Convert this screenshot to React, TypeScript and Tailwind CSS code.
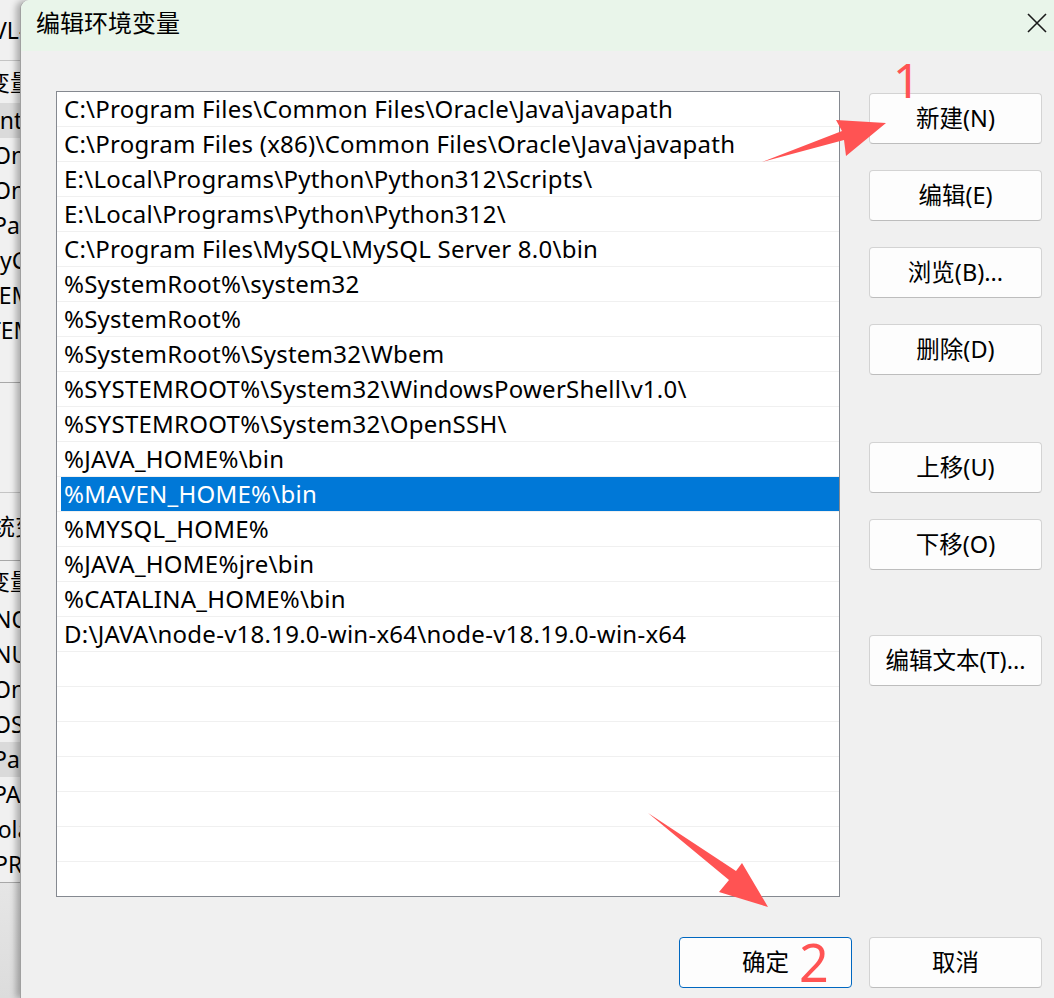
import React from "react";

const items: string[] = [
  "C:\\Program Files\\Common Files\\Oracle\\Java\\javapath",
  "C:\\Program Files (x86)\\Common Files\\Oracle\\Java\\javapath",
  "E:\\Local\\Programs\\Python\\Python312\\Scripts\\",
  "E:\\Local\\Programs\\Python\\Python312\\",
  "C:\\Program Files\\MySQL\\MySQL Server 8.0\\bin",
  "%SystemRoot%\\system32",
  "%SystemRoot%",
  "%SystemRoot%\\System32\\Wbem",
  "%SYSTEMROOT%\\System32\\WindowsPowerShell\\v1.0\\",
  "%SYSTEMROOT%\\System32\\OpenSSH\\",
  "%JAVA_HOME%\\bin",
  "%MAVEN_HOME%\\bin",
  "%MYSQL_HOME%",
  "%JAVA_HOME%jre\\bin",
  "%CATALINA_HOME%\\bin",
  "D:\\JAVA\\node-v18.19.0-win-x64\\node-v18.19.0-win-x64",
  "",
  "",
  "",
  "",
  "",
  "",
  "",
];

function Btn({ label, primary, className = "" }: { label: string; primary?: boolean; className?: string }) {
  return (
    <div
      className={
        "w-[173px] h-[51px] shrink-0 flex items-center justify-center rounded-[4px] bg-[#fdfdfd] text-[23.5px] text-black " +
        (primary
          ? "border border-[#0067c0] "
          : "border border-[#d3d3d3] border-b-[#bdbdbd] ") +
        className
      }
    >
      {label}
    </div>
  );
}

function StripRow({ text, h, bg = "", ml = "-ml-[3px]" }: { text: string; h: string; bg?: string; ml?: string }) {
  return (
    <div className={"flex items-center whitespace-nowrap shrink-0 " + h + " " + bg}>
      <span className={ml}>{text}</span>
    </div>
  );
}

export default function App() {
  return (
    <div className="relative w-[1054px] h-[998px] overflow-hidden flex bg-[#f0f0f0] font-['Noto_Sans','Noto_Sans_CJK_SC',sans-serif] text-black">
      {/* background window strip */}
      <div className="w-[24px] shrink-0 flex flex-col overflow-hidden text-[23px] bg-[#f0f0f0] -mr-[4px]">
        <StripRow text="VL-" h="h-[60px]" ml="-ml-[7px]" />
        <div className="h-px bg-[#c4c4c4] shrink-0" />
        <StripRow text="变量" h="h-[42px]" ml="-ml-[13px]" />
        <StripRow text="Inte" h="h-[35px]" bg="bg-[#dadada]" ml="-ml-[8px]" />
        <StripRow text="On" h="h-[35px]" ml="-ml-[7px]" />
        <StripRow text="On" h="h-[35px]" ml="-ml-[7px]" />
        <StripRow text="Pat" h="h-[35px]" ml="-ml-[7px]" />
        <StripRow text="PyC" h="h-[35px]" ml="-ml-[14px]" />
        <StripRow text="TEM" h="h-[35px]" ml="-ml-[14px]" />
        <StripRow text="TEM" h="h-[35px]" ml="-ml-[12px]" />
        <div className="h-[34px] shrink-0" />
        <div className="h-px bg-[#a8a8a8] shrink-0" />
        <div className="h-[109px] shrink-0" />
        <div className="h-px bg-[#c4c4c4] shrink-0" />
        <StripRow text="统变" h="h-[67px]" ml="-ml-[8px]" />
        <div className="h-px bg-[#a8a8a8] shrink-0" />
        <StripRow text="变量" h="h-[41px]" ml="-ml-[13px]" />
        <StripRow text="NO" h="h-[35px]" ml="-ml-[6px]" />
        <StripRow text="NU" h="h-[35px]" ml="-ml-[6px]" />
        <StripRow text="On" h="h-[35px]" ml="-ml-[7px]" />
        <StripRow text="OS" h="h-[35px]" ml="-ml-[7px]" />
        <StripRow text="Pat" h="h-[35px]" bg="bg-[#dadada]" ml="-ml-[7px]" />
        <StripRow text="PA" h="h-[35px]" ml="-ml-[7px]" />
        <StripRow text="Sola" h="h-[35px]" ml="-ml-[15px]" />
        <StripRow text="PR" h="h-[35px]" ml="-ml-[6px]" />
        <div className="h-px bg-[#a8a8a8] shrink-0" />
        <div className="flex-1 bg-gradient-to-b from-[#e6e6e6] to-[#dcdcdc]" />
      </div>

      {/* dialog */}
      <div className="relative z-10 flex-1 flex flex-col rounded-tl-[9px] overflow-hidden bg-[#f0f0f0] shadow-[-4px_0_6px_rgba(0,0,0,0.28)] border-l border-[#a0a0a0]">
        <div className="h-[51px] shrink-0 bg-[#e9f5ea] flex items-start justify-between">
          <span className="ml-[15px] mt-[5px] text-[24px] leading-[34px] font-['Noto_Sans_CJK_SC',sans-serif]">编辑环境变量</span>
          <svg className="mt-[13px] mr-[7px]" width="20" height="20" viewBox="0 0 20 20">
            <path d="M1 1 L19 19 M19 1 L1 19" stroke="#1a1a1a" strokeWidth="1.6" fill="none" />
          </svg>
        </div>

        <div className="flex flex-col pl-[35px] pt-[40px]">
          <div className="flex items-start">
            <div className="w-[784px] h-[806px] shrink-0 border border-[#858990] bg-white overflow-hidden">
              {items.map((t, i) => {
                const sel = i === 11;
                return (
                  <div key={i} className="h-[35px] border-b border-[#f0f0f0] flex">
                    <div
                      className={
                        "flex-1 flex items-center whitespace-nowrap text-[24px] tracking-[0.25px] " +
                        (sel ? "ml-[4px] pl-[3px] bg-[#0078d7] text-white" : "pl-[7px]")
                      }
                    >
                      {t}
                    </div>
                  </div>
                );
              })}
            </div>

            <div className="ml-[29px] mt-[2px] flex flex-col gap-[26px]">
              <Btn label="新建(N)" />
              <Btn label="编辑(E)" />
              <Btn label="浏览(B)..." />
              <Btn label="删除(D)" />
              <Btn label="上移(U)" className="mt-[41px]" />
              <Btn label="下移(O)" />
              <Btn label="编辑文本(T)..." className="mt-[39px]" />
            </div>
          </div>

          <div className="flex justify-end gap-[17px] mt-[40px] pr-[12px]">
            <Btn label="确定" primary />
            <Btn label="取消" />
          </div>
        </div>
      </div>

      {/* annotations */}
      <svg className="absolute inset-0 z-20 pointer-events-none" width="1054" height="998" viewBox="0 0 1054 998">
        <polygon points="762,162 842,131 836,120 886,123 846,156 844,140" fill="#ff5353" />
        <polygon points="648,813 736,871 742,863 768,907 719,892 729,880" fill="#ff5353" />
      </svg>
      <div className="absolute z-20 left-[893px] top-[56px] text-[48px] leading-none text-[#ff5353] font-['Noto_Sans',sans-serif]">1</div>
      <div className="absolute z-20 left-[799px] top-[936px] text-[52px] leading-none text-[#ff5353] font-['Noto_Sans',sans-serif]">2</div>
    </div>
  );
}
